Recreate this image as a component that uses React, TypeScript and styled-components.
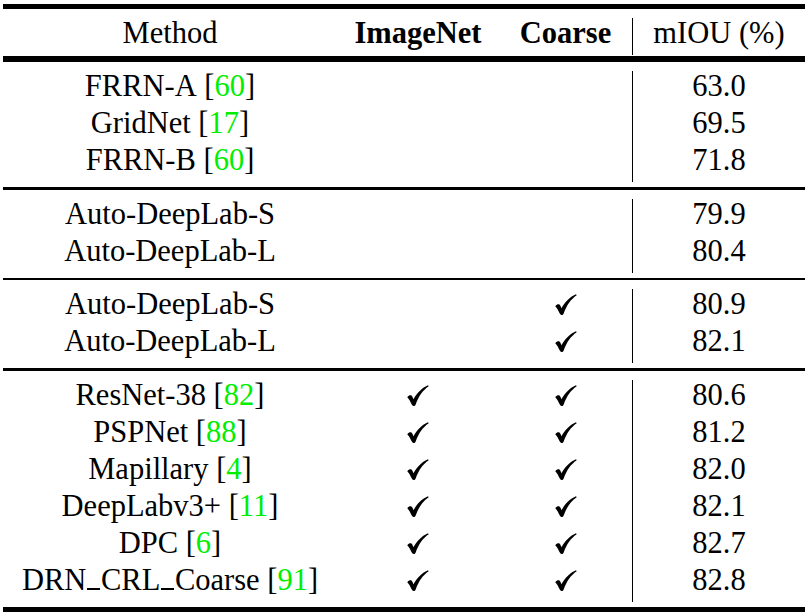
import React from 'react';
import styled, { createGlobalStyle } from 'styled-components';

const GlobalStyle = createGlobalStyle`
  html, body {
    margin: 0;
    padding: 0;
    background: #ffffff;
  }
`;

const Page = styled.div`
  width: 808px;
  height: 613px;
  padding: 4px 0 0 3px;
  box-sizing: border-box;
  overflow: hidden;
  font-family: 'Liberation Serif', Tinos, 'Times New Roman', Times, 'Nimbus Roman', 'DejaVu Serif', serif;
  font-size: 30.5px;
  color: #000000;
`;

const Table = styled.div`
  width: 802px;
  display: flex;
  flex-direction: column;
`;

const Rule = styled.div<{ $weight: number }>`
  height: ${(p) => p.$weight}px;
  background: #000000;
`;

const Group = styled.div<{ $below?: number }>`
  padding: 9px 0 ${(p) => (p.$below ?? 5)}px;
`;

const Row = styled.div`
  display: grid;
  grid-template-columns: 334px 162px 133px 173px;
  height: 37px;
`;

const Cell = styled.div<{ $bold?: boolean; $divider?: boolean }>`
  text-align: center;
  line-height: 31px;
  white-space: nowrap;
  font-family: 'Liberation Serif', Tinos, 'Times New Roman', Times, serif;
  font-weight: ${(p) => (p.$bold ? 700 : 400)};
  border-left: ${(p) => (p.$divider ? '1.5px solid #000' : 'none')};
`;

const Cite = styled.span`
  color: #00ee00;
`;

const Underscore = styled.span`
  display: inline-block;
  width: 0.42em;
  height: 2px;
  margin: 0 0.03em;
  background: currentColor;
`;

const CheckMark = styled.svg`
  display: inline-block;
  vertical-align: -1px;
`;

const Check = () => (
  <CheckMark width="22" height="21" viewBox="0 0 22 21">
    <path
      d="M0.3 12.2 C1.6 10.6 3.2 10 4.4 10.6 C5.3 11.1 5.8 12.6 6.5 14.2 C9.8 8.2 14.2 3.2 21 0.2 L21.7 1.2 C15.8 5.2 11.6 11.2 8.8 19.2 C8.3 20.5 7.6 21 6.7 21 C5.7 21 5.2 20.3 4.5 19 C3.3 16.4 2 14 0.3 12.2 Z"
      fill="#000"
    />
  </CheckMark>
);

type Entry = {
  name: React.ReactNode;
  cite?: string;
  imagenet?: boolean;
  coarse?: boolean;
  miou: string;
};

const groups: Entry[][] = [
  [
    { name: 'FRRN-A', cite: '60', miou: '63.0' },
    { name: 'GridNet', cite: '17', miou: '69.5' },
    { name: 'FRRN-B', cite: '60', miou: '71.8' },
  ],
  [
    { name: 'Auto-DeepLab-S', miou: '79.9' },
    { name: 'Auto-DeepLab-L', miou: '80.4' },
  ],
  [
    { name: 'Auto-DeepLab-S', coarse: true, miou: '80.9' },
    { name: 'Auto-DeepLab-L', coarse: true, miou: '82.1' },
  ],
  [
    { name: 'ResNet-38', cite: '82', imagenet: true, coarse: true, miou: '80.6' },
    { name: 'PSPNet', cite: '88', imagenet: true, coarse: true, miou: '81.2' },
    { name: 'Mapillary', cite: '4', imagenet: true, coarse: true, miou: '82.0' },
    { name: 'DeepLabv3+', cite: '11', imagenet: true, coarse: true, miou: '82.1' },
    { name: 'DPC', cite: '6', imagenet: true, coarse: true, miou: '82.7' },
    {
      name: (
        <>
          DRN<Underscore />CRL<Underscore />Coarse
        </>
      ),
      cite: '91',
      imagenet: true,
      coarse: true,
      miou: '82.8',
    },
  ],
];

const App: React.FC = () => {
  return (
    <Page>
      <GlobalStyle />
      <Table>
        <Rule $weight={5} />
        <Group $below={1}>
          <Row>
            <Cell>Method</Cell>
            <Cell $bold>ImageNet</Cell>
            <Cell $bold>Coarse</Cell>
            <Cell $divider>mIOU (%)</Cell>
          </Row>
        </Group>
        <Rule $weight={6} />
        {groups.map((rows, gi) => (
          <React.Fragment key={gi}>
            <Group>
              {rows.map((r, ri) => (
                <Row key={ri}>
                  <Cell>
                    {r.name}
                    {r.cite && (
                      <>
                        &nbsp;[<Cite>{r.cite}</Cite>]
                      </>
                    )}
                  </Cell>
                  <Cell>{r.imagenet && <Check />}</Cell>
                  <Cell>{r.coarse && <Check />}</Cell>
                  <Cell $divider>{r.miou}</Cell>
                </Row>
              ))}
            </Group>
            <Rule $weight={gi === groups.length - 1 ? 5 : 2.5} />
          </React.Fragment>
        ))}
      </Table>
    </Page>
  );
};

export default App;
